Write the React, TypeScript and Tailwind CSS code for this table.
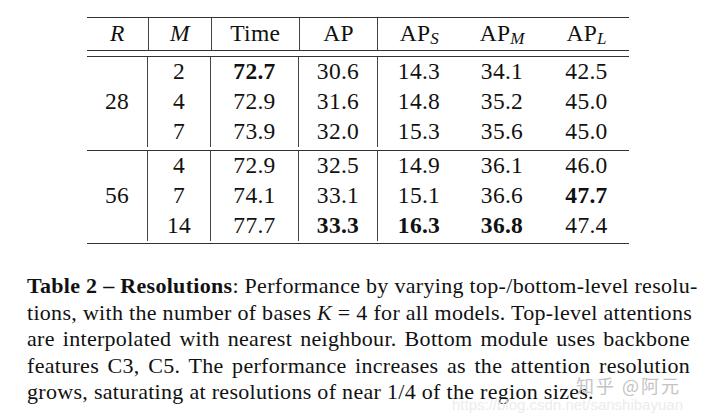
import React from "react";

const serif = { fontFamily: '"Liberation Serif", "Times New Roman", Times, serif' };

type Cell = { v: string; b?: boolean };

const group1: Cell[][] = [
  [{ v: "2" }, { v: "72.7", b: true }, { v: "30.6" }, { v: "14.3" }, { v: "34.1" }, { v: "42.5" }],
  [{ v: "4" }, { v: "72.9" }, { v: "31.6" }, { v: "14.8" }, { v: "35.2" }, { v: "45.0" }],
  [{ v: "7" }, { v: "73.9" }, { v: "32.0" }, { v: "15.3" }, { v: "35.6" }, { v: "45.0" }],
];
const group2: Cell[][] = [
  [{ v: "4" }, { v: "72.9" }, { v: "32.5" }, { v: "14.9" }, { v: "36.1" }, { v: "46.0" }],
  [{ v: "7" }, { v: "74.1" }, { v: "33.1" }, { v: "15.1" }, { v: "36.6" }, { v: "47.7", b: true }],
  [{ v: "14" }, { v: "77.7" }, { v: "33.3", b: true }, { v: "16.3", b: true }, { v: "36.8", b: true }, { v: "47.4" }],
];

function Group({ r, rows, pb }: { r: string; rows: Cell[][]; pb: string }) {
  return (
    <div className={`flex ${pb}`}>
      <div className="w-[61px] flex items-center justify-center">{r}</div>
      <div className="w-px self-stretch bg-[#444]" />
      <div className="flex flex-col">
        {rows.map((row, i) => (
          <div key={i} className="flex h-[30px] items-center">
            <div className="w-[62px] text-center">{row[0].v}</div>
            <div className="w-px self-stretch bg-[#444]" />
            <div className={`w-[87px] text-center ${row[1].b ? "font-bold" : ""}`}>{row[1].v}</div>
            <div className="w-px self-stretch bg-[#444]" />
            <div className={`w-[78px] text-center ${row[2].b ? "font-bold" : ""}`}>{row[2].v}</div>
            <div className="w-px self-stretch bg-[#444]" />
            <div className={`w-[82px] text-center ${row[3].b ? "font-bold" : ""}`}>{row[3].v}</div>
            <div className={`w-[84px] text-center ${row[4].b ? "font-bold" : ""}`}>{row[4].v}</div>
            <div className={`w-[85px] text-center ${row[5].b ? "font-bold" : ""}`}>{row[5].v}</div>
          </div>
        ))}
      </div>
    </div>
  );
}

export default function App() {
  return (
    <div className="relative w-[701px] h-[414px] bg-white text-[#111] overflow-hidden" style={serif}>
      <div className="pt-[17px] pl-[87px]">
        <div className="w-[542px] text-[23.5px] leading-none tracking-[0.3px]">
          <div className="h-px bg-[#333]" />
          <div className="flex h-[32px] items-center">
            <div className="w-[61px] text-center italic">R</div>
            <div className="w-px self-stretch bg-[#444]" />
            <div className="w-[62px] text-center italic">M</div>
            <div className="w-px self-stretch bg-[#444]" />
            <div className="w-[87px] text-center">Time</div>
            <div className="w-px self-stretch bg-[#444]" />
            <div className="w-[78px] text-center">AP</div>
            <div className="w-px self-stretch bg-[#444]" />
            <div className="w-[82px] text-center">
              AP<span className="italic text-[17px] relative top-[3px]">S</span>
            </div>
            <div className="w-[84px] text-center">
              AP<span className="italic text-[17px] relative top-[3px]">M</span>
            </div>
            <div className="w-[85px] text-center">
              AP<span className="italic text-[17px] relative top-[3px]">L</span>
            </div>
          </div>
          <div className="h-px bg-[#333]" />
          <div className="h-[5px]" />
          <div className="h-px bg-[#333]" />
          <Group r="28" rows={group1} pb="pb-[3px]" />
          <div className="h-px bg-[#333]" />
          <Group r="56" rows={group2} pb="pb-[2px]" />
          <div className="h-px bg-[#333]" />
        </div>
      </div>

      <div className="mt-[29px] ml-[27px] w-[663px] text-[22px] leading-[26.5px] tracking-[0.3px] text-[#111]">
        <div className="whitespace-nowrap text-justify [text-align-last:justify]">
          <b>Table 2 – Resolutions</b>: Performance by varying top-/bottom-level resolu-
        </div>
        <div className="whitespace-nowrap text-justify [text-align-last:justify]">
          tions, with the number of bases <i>K</i> = 4 for all models. Top-level attentions
        </div>
        <div className="whitespace-nowrap text-justify [text-align-last:justify]">
          are interpolated with nearest neighbour. Bottom module uses backbone
        </div>
        <div className="whitespace-nowrap text-justify [text-align-last:justify]">
          features C3, C5. The performance increases as the attention resolution
        </div>
        <div className="whitespace-nowrap">grows, saturating at resolutions of near 1/4 of the region sizes.</div>
      </div>

      <div
        className="absolute left-[576px] top-[376px] text-[18px] leading-none text-[#c4c4c4] tracking-[2px]"
        style={{ fontFamily: '"Noto Sans CJK SC", "Noto Sans", sans-serif' }}
      >
        知乎 @阿元
      </div>
      <div
        className="absolute left-[452px] top-[397px] text-[15px] leading-none text-[#ececec]"
        style={{ fontFamily: '"Liberation Sans", Arial, sans-serif' }}
      >
        https://blog.csdn.net/sanshibayuan
      </div>
    </div>
  );
}
